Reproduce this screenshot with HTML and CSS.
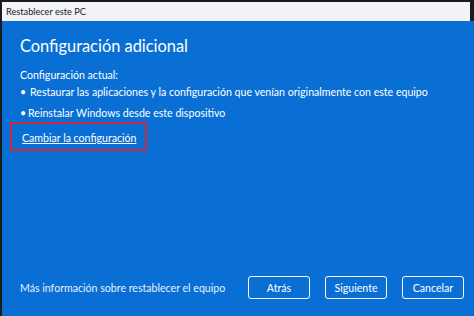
FILE: index.html
```html
<!DOCTYPE html>
<html>
  <head>
    <meta charset="utf-8">
    <title>Restablecer este PC</title>
    <link rel="stylesheet" href="styles.css">
  </head>
  <body>
    <div class="window">
      <div class="titlebar">Restablecer este PC</div>

      <div class="panel">
        <div class="content">
          <h1 class="heading">Configuración adicional</h1>
          <div class="label">Configuración actual:</div>
          <ul class="list">
            <li class="item item_wide">Restaurar las aplicaciones y la configuración que venían originalmente con este equipo</li>
            <li class="item">Reinstalar Windows desde este dispositivo</li>
          </ul>
          <div class="highlight">
            <a class="link" href="#">Cambiar la configuración</a>
          </div>
        </div>

        <div class="footer">
          <a class="more" href="#">Más información sobre restablecer el equipo</a>
          <div class="buttons">
            <button class="btn">Atrás</button>
            <button class="btn">Siguiente</button>
            <button class="btn">Cancelar</button>
          </div>
        </div>
      </div>
    </div>
  </body>
</html>
```

FILE: styles.css
```css
* {
  margin: 0;
  padding: 0;
  box-sizing: border-box;
}

body {
  width: 474px;
  height: 316px;
  overflow: hidden;
  background: #1b1b1b;
  font-family: Lato, "Noto Sans", sans-serif;
}

.window {
  display: flex;
  flex-direction: column;
  height: 316px;
  margin-left: 2px;
  padding-top: 2px;
}

.titlebar {
  height: 19px;
  margin-right: 4px;
  padding-left: 4px;
  background: #f1f3f8;
  color: #1a1a1a;
  font-size: 9.2px;
  line-height: 19px;
}

.panel {
  flex: 1;
  display: flex;
  flex-direction: column;
  justify-content: space-between;
  background: #0a6fd5;
  color: #fff;
}

.content {
  padding: 13px 0 0 18px;
  white-space: nowrap;
}

.heading {
  font-weight: normal;
  font-size: 16.4px;
  line-height: 24px;
  margin-bottom: 9px;
}

.label {
  font-size: 10.6px;
  line-height: 16px;
}

.list {
  list-style: none;
  font-size: 10.6px;
}

.item {
  line-height: 18px;
}

.item + .item {
  margin-top: 3px;
}

.item::before {
  content: "\2022";
  display: inline-block;
  width: 8px;
}

.item_wide::before {
  width: 10px;
}

.highlight {
  display: inline-block;
  margin-left: -10px;
  padding: 2px 9px 3px 10px;
  border: 2px solid #d02a3f;
}

.link {
  color: #fff;
  font-size: 10.6px;
  line-height: 15px;
}

.footer {
  display: flex;
  justify-content: space-between;
  align-items: center;
  padding: 0 10px 17px 18px;
  white-space: nowrap;
}

.more {
  color: #e6f1ff;
  text-decoration: none;
  font-size: 10.6px;
}

.buttons {
  display: flex;
  gap: 15px;
}

.btn {
  width: 62px;
  height: 23px;
  background: transparent;
  color: #fff;
  border: 1.5px solid #fff;
  border-radius: 3px;
  font-family: inherit;
  font-size: 10.6px;
}
```
